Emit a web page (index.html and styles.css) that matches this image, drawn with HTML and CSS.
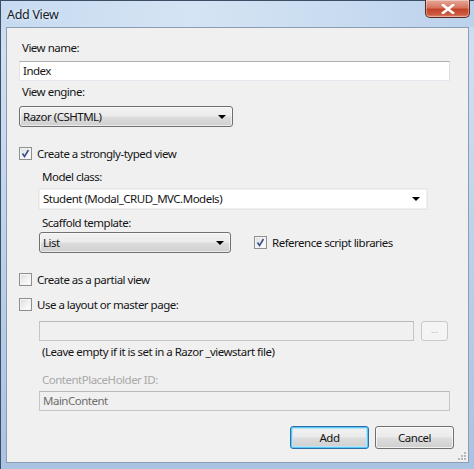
FILE: index.html
```html
<!DOCTYPE html>
<html>
<head>
<meta charset="utf-8">
<link rel="stylesheet" href="styles.css">
</head>
<body>
<div class="window">
  <div class="titlebar">
    <span class="title">Add View</span>
    <div class="close">
      <svg width="14" height="10" viewBox="0 0 14 10"><path d="M2 1 L12 9 M12 1 L2 9" stroke="#fff" stroke-width="2.6" stroke-linecap="square"/></svg>
    </div>
  </div>
  <div class="client">
    <div class="label first">View name:</div>
    <div class="textbox tb-index">Index</div>
    <div class="label after-input">View engine:</div>
    <div class="combo combo-razor">Razor (CSHTML)<span class="arrow"></span></div>

    <div class="check-row row-typed">
      <span class="check checked"><svg width="11" height="11" viewBox="0 0 11 11"><path d="M2.5 5.5 L4.5 8.5 L8.5 2" fill="none" stroke="#3b4f8e" stroke-width="1.6"/></svg></span>
      <span>Create a strongly-typed view</span>
    </div>
    <div class="indent">
      <div class="label model">Model class:</div>
      <div class="combo-edit">Student (Modal_CRUD_MVC.Models)<span class="arrow"></span></div>
      <div class="label scaffold">Scaffold template:</div>
      <div class="list-row">
        <div class="combo combo-list">List<span class="arrow"></span></div>
        <div class="check-row">
          <span class="check checked"><svg width="11" height="11" viewBox="0 0 11 11"><path d="M2.5 5.5 L4.5 8.5 L8.5 2" fill="none" stroke="#3b4f8e" stroke-width="1.6"/></svg></span>
          <span>Reference script libraries</span>
        </div>
      </div>
    </div>

    <div class="check-row row-partial">
      <span class="check"></span>
      <span>Create as a partial view</span>
    </div>
    <div class="check-row row-layout">
      <span class="check"></span>
      <span>Use a layout or master page:</span>
    </div>
    <div class="indent">
      <div class="layout-row">
        <div class="textbox disabled tb-layout"></div>
        <div class="browse">...</div>
      </div>
      <div class="label hint">(Leave empty if it is set in a Razor _viewstart file)</div>
      <div class="label dim cph">ContentPlaceHolder ID:</div>
      <div class="textbox disabled tb-main">MainContent</div>
    </div>

    <div class="buttons">
      <div class="btn btn-default">Add</div>
      <div class="btn">Cancel</div>
    </div>
    <svg class="grip" width="10" height="10" viewBox="0 0 10 10">
      <g fill="#b8b8b8">
        <rect x="7" y="1" width="2" height="2"/>
        <rect x="4" y="4" width="2" height="2"/><rect x="7" y="4" width="2" height="2"/>
        <rect x="1" y="7" width="2" height="2"/><rect x="4" y="7" width="2" height="2"/><rect x="7" y="7" width="2" height="2"/>
      </g>
    </svg>
  </div>
</div>
</body>
</html>
```

FILE: styles.css
```css
* { box-sizing: border-box; }
html, body { margin: 0; padding: 0; }
body {
  width: 474px;
  height: 469px;
  overflow: hidden;
  font-family: "Noto Sans", "Open Sans", sans-serif;
  font-size: 11.5px;
  letter-spacing: -0.5px;
  color: #151515;
  background: #b9d1ea;
}
.window {
  width: 474px;
  height: 469px;
  display: flex;
  flex-direction: column;
  background: linear-gradient(180deg, #c2d7ee 0%, #cfe0f3 10%, #b9cfe8 60%, #a9c3e2 100%);
  border-left: 1px solid #3c4e66;
  border-top: 1px solid #3c4e66;
}
.titlebar {
  height: 26px;
  display: flex;
  justify-content: space-between;
  align-items: flex-start;
  padding-left: 6px;
  background: linear-gradient(90deg, #c6daf0 0%, #d5e4f4 40%, #c9dcf0 70%, #bcd2ec 100%);
}
.title {
  margin-top: 5px;
  font-size: 12.5px;
  letter-spacing: -0.3px;
  color: #14202e;
  text-shadow: 0 0 4px #ffffff;
}
.close {
  width: 45px;
  height: 18px;
  margin-right: 4px;
  margin-top: -1px;
  border: 1px solid #5a2a22;
  border-top: none;
  border-radius: 0 0 5px 5px;
  background: linear-gradient(180deg, #e8a899 0%, #d6755f 45%, #c4432a 55%, #cb5a40 85%, #e08c72 100%);
  box-shadow: inset 0 0 0 1px rgba(255,255,255,0.35);
  display: flex;
  align-items: center;
  justify-content: center;
}
.client {
  position: relative;
  margin: 0 5px 0 5px;
  height: 436px;
  border: 1px solid #8a9db4;
  background: #f0f0f0;
  padding: 12px 18px 0 12px;
  display: flex;
  flex-direction: column;
}
.label {
  height: 16px;
  line-height: 16px;
  padding-left: 3px;
  white-space: nowrap;
}
.first { margin-top: 0; }
.textbox {
  height: 20px;
  line-height: 18px;
  padding-left: 3px;
  background: #fff;
  border: 1px solid #e3e9ef;
  border-top-color: #abadb3;
  border-left-color: #e2e3ea;
  border-right-color: #dbdfe6;
}
.tb-index { margin-top: 5px; }
.after-input { margin-top: 3px; }
.combo {
  position: relative;
  height: 21px;
  line-height: 19px;
  padding-left: 3px;
  border: 1px solid #707070;
  border-radius: 3px;
  background: linear-gradient(180deg, #f2f2f2 0%, #ebebeb 48%, #dddddd 52%, #cfcfcf 100%);
  box-shadow: inset 0 0 0 1px rgba(255,255,255,0.6);
}
.combo-razor { width: 214px; margin-top: 6px; }
.arrow {
  position: absolute;
  right: 6px;
  top: 50%;
  margin-top: -2px;
  width: 0;
  height: 0;
  border-left: 4px solid transparent;
  border-right: 4px solid transparent;
  border-top: 4px solid #000;
}
.check-row {
  display: flex;
  align-items: center;
  height: 16px;
  white-space: nowrap;
}
.check {
  width: 13px;
  height: 13px;
  margin-right: 5px;
  border: 1px solid #8e8f8f;
  background: linear-gradient(135deg, #dcdcdc 0%, #f4f4f4 60%, #ffffff 100%);
  box-shadow: inset 0 0 0 1px #f4f4f4;
  display: flex;
  align-items: center;
  justify-content: center;
  flex: none;
}
.check svg { display: block; }
.row-typed { margin-top: 18px; }
.indent {
  padding-left: 20px;
  display: flex;
  flex-direction: column;
}
.model { margin-top: 8px; }
.combo-edit {
  position: relative;
  margin-top: 4px;
  width: 388px;
  height: 20px;
  line-height: 18px;
  padding-left: 3px;
  background: #fff;
  border: 1px solid #f0f0f0;
  box-shadow: 0 0 0 1px #e6e6e6;
}
.scaffold { margin-top: 6px; }
.list-row {
  margin-top: 1px;
  display: flex;
  align-items: center;
}
.combo-list { width: 192px; margin-right: 23px; }
.row-partial { margin-top: 18px; }
.row-layout { margin-top: 9px; }
.layout-row {
  margin-top: 9px;
  display: flex;
  gap: 7px;
}
.disabled {
  background: #f0f0f0;
  border: 1px solid #c5c5c5;
  border-top-color: #b9b9b9;
  color: #6d6d6d;
}
.tb-layout { width: 375px; }
.browse {
  width: 27px;
  height: 20px;
  border: 1px solid #c8c8c8;
  border-radius: 3px;
  background: #f4f4f4;
  color: #b5b5b5;
  font-size: 9px;
  letter-spacing: 0;
  text-align: center;
  line-height: 16px;
}
.hint { margin-top: 3px; padding-left: 3px; }
.dim { color: #a9a9a9; }
.cph { margin-top: 12px; }
.tb-main { margin-top: 3px; }
.buttons {
  margin-top: 15px;
  margin-right: -4px;
  display: flex;
  justify-content: flex-end;
  gap: 6px;
}
.btn {
  width: 79px;
  height: 23px;
  line-height: 21px;
  text-align: center;
  border: 1px solid #707070;
  border-radius: 3px;
  background: linear-gradient(180deg, #f2f2f2 0%, #ebebeb 48%, #dddddd 52%, #cfcfcf 100%);
  box-shadow: inset 0 0 0 1px rgba(255,255,255,0.7);
}
.btn-default {
  border-color: #2a6fa8;
  box-shadow: inset 0 0 0 1px #5cc8f5, inset 0 0 0 2px #b5e5fa;
}
.grip {
  position: absolute;
  right: 1px;
  bottom: 1px;
}
```
